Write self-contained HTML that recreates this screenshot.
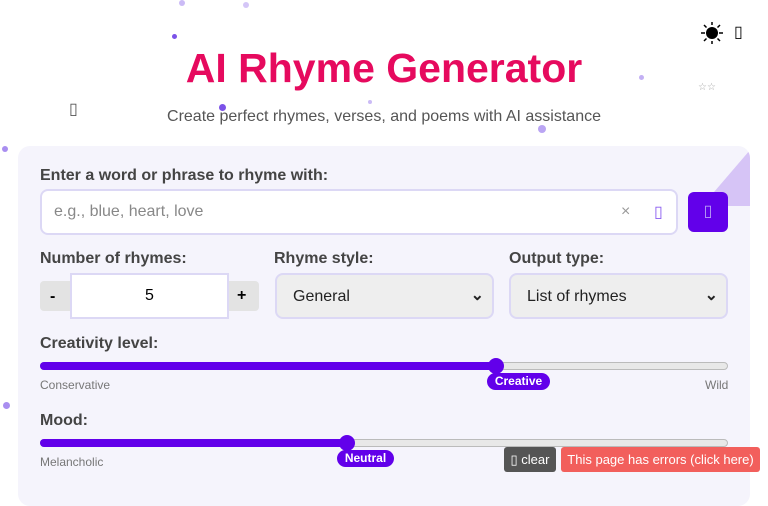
<!DOCTYPE html>
<html><head><meta charset="utf-8"><style>
*{box-sizing:border-box;margin:0;padding:0}
body{width:768px;height:480px;overflow:hidden;background:#fff;font-family:"Liberation Sans",sans-serif;position:relative}
.a{position:absolute}
.dot{position:absolute;border-radius:50%;background:#a98ef0}
h1{position:absolute;left:0;width:768px;top:45px;text-align:center;font-size:41px;font-weight:bold;color:#e60a5e}
.sub{position:absolute;left:0;width:768px;top:108px;text-align:center;font-size:16px;color:#555}
.card{position:absolute;left:18px;top:146px;width:732px;height:360px;background:#f5f4fc;border-radius:12px;overflow:hidden}
.lbl{position:absolute;font-size:16px;font-weight:bold;color:#444}
.sel{position:absolute;height:46px;background:#eee;border:2px solid #dcd8f5;border-radius:8px;font-size:16px;color:#222;padding:13px 16px}
.sel:after{content:"⌄";position:absolute;right:8px;top:10px;font-size:16px;font-weight:bold}
.track{position:absolute;height:8px;background:#e8e8e8;border:1px solid #bbb;border-radius:4px}
.fill{position:absolute;height:8px;background:#6200ea;border-radius:4px}
.thumb{position:absolute;width:16px;height:16px;border-radius:50%;background:#6200ea}
.badge{position:absolute;height:17px;background:#6200ea;color:#fff;font-size:12px;font-weight:bold;border-radius:9px;text-align:center;line-height:17px}
.sm{position:absolute;font-size:12px;color:#777}
</style></head><body>
<div class="dot" style="left:179px;top:0;width:6px;height:6px;opacity:.6"></div>
<div class="dot" style="left:243px;top:2px;width:6px;height:6px;opacity:.5"></div>
<div class="dot" style="left:172px;top:34px;width:5px;height:5px;background:#7b52e8"></div>
<div class="dot" style="left:219px;top:104px;width:7px;height:7px;background:#7b52e8"></div>
<div class="dot" style="left:368px;top:100px;width:4px;height:4px;opacity:.6"></div>
<div class="dot" style="left:639px;top:75px;width:5px;height:5px;opacity:.7"></div>
<div class="dot" style="left:538px;top:125px;width:8px;height:8px;opacity:.8"></div>
<div class="dot" style="left:2px;top:146px;width:6px;height:6px"></div>
<div class="dot" style="left:3px;top:402px;width:7px;height:7px"></div>
<svg class="a" style="left:700px;top:22px" width="24" height="22" viewBox="0 0 24 22"><circle cx="12" cy="11" r="6" fill="#000"/><g stroke="#000" stroke-width="1.5"><path d="M12 0v3M12 19v3M1 11h4M19 11h4M4 3l2.5 2.5M17.5 16.5L20 19M4 19l2.5-2.5M17.5 5.5L20 3"/></g></svg>
<div class="a" style="left:734px;top:22px;font-size:16px">▯</div>
<div class="a" style="left:69px;top:99px;font-size:16px;color:#555">▯</div>
<div class="a" style="left:698px;top:82px;font-size:10px;color:#aaa">☆☆</div>
<h1>AI Rhyme Generator</h1>
<div class="sub">Create perfect rhymes, verses, and poems with AI assistance</div>
<div class="card">
<div class="a" style="right:0;top:4px;width:48px;height:56px;background:#d6c4f6;clip-path:polygon(100% 0,100% 100%,0 100%)"></div>
<div class="lbl" style="left:22px;top:21px">Enter a word or phrase to rhyme with:</div>
<div class="a" style="left:22px;top:43px;width:638px;height:46px;background:#fff;border:2px solid #dcd8f5;border-radius:8px"></div>
<div class="a" style="left:36px;top:57px;font-size:16px;color:#888">e.g., blue, heart, love</div>
<div class="a" style="left:603px;top:57px;font-size:16px;color:#999">×</div>
<div class="a" style="left:636px;top:56px;font-size:16px;color:#8a5cf0">▯</div>
<div class="a" style="left:670px;top:46px;width:40px;height:40px;background:#6200ea;border-radius:6px;color:#b9a0f5;text-align:center;line-height:40px">▯</div>
<div class="lbl" style="left:22px;top:104px">Number of rhymes:</div>
<div class="lbl" style="left:256px;top:104px">Rhyme style:</div>
<div class="lbl" style="left:491px;top:104px">Output type:</div>
<div class="a" style="left:22px;top:135px;width:219px;height:30px;background:#e3e3e3;border-radius:4px"></div>
<div class="a" style="left:32px;top:142px;font-weight:bold;font-size:16px">-</div>
<div class="a" style="left:219px;top:141px;font-weight:bold;font-size:16px">+</div>
<div class="a" style="left:52px;top:127px;width:159px;height:46px;background:#fff;border:2px solid #dcd8f5;text-align:center;line-height:42px;font-size:16px">5</div>
<div class="sel" style="left:257px;top:127px;width:219px">General</div>
<div class="sel" style="left:491px;top:127px;width:219px">List of rhymes</div>
<div class="lbl" style="left:22px;top:189px">Creativity level:</div>
<div class="track" style="left:22px;top:216px;width:688px"></div>
<div class="fill" style="left:22px;top:216px;width:456px"></div>
<div class="thumb" style="left:470px;top:212px"></div>
<div class="sm" style="left:22px;top:232px">Conservative</div>
<div class="sm" style="left:687px;top:232px">Wild</div>
<div class="badge" style="left:469px;top:227px;width:63px">Creative</div>
<div class="lbl" style="left:22px;top:266px">Mood:</div>
<div class="track" style="left:22px;top:293px;width:688px"></div>
<div class="fill" style="left:22px;top:293px;width:307px"></div>
<div class="thumb" style="left:321px;top:289px"></div>
<div class="sm" style="left:22px;top:309px">Melancholic</div>
<div class="badge" style="left:319px;top:304px;width:57px">Neutral</div>
</div>
<div class="a" style="left:504px;top:447px;width:52px;height:25px;background:#555;border-radius:3px;color:#fff;font-size:13px;line-height:25px;text-align:center">▯ clear</div>
<div class="a" style="left:561px;top:447px;width:199px;height:25px;background:#f25f5c;border-radius:3px;color:#fff;font-size:13px;line-height:25px;text-align:center">This page has errors (click here)</div>
</body></html>
